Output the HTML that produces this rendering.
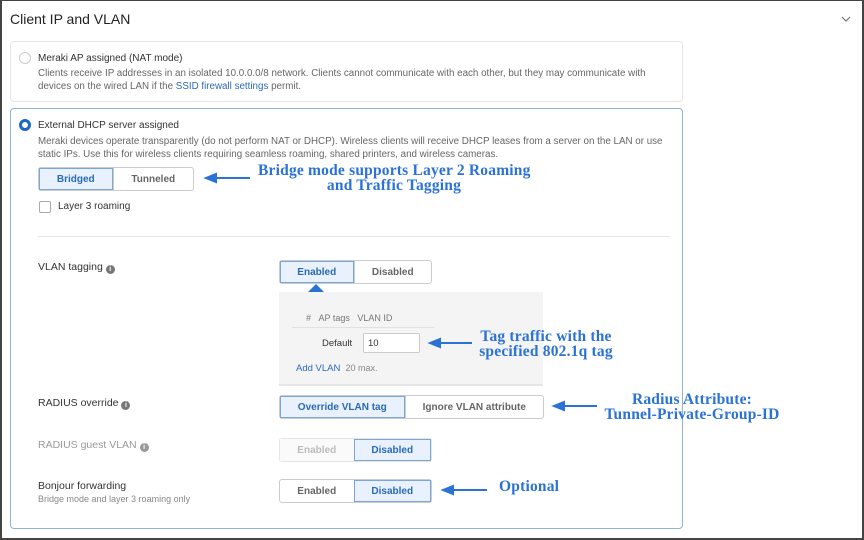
<!DOCTYPE html>
<html><head><meta charset="utf-8"><style>
*{margin:0;padding:0;box-sizing:border-box}
body{width:864px;height:540px;overflow:hidden;background:#fff;font-family:"Liberation Sans",sans-serif;position:relative}
.a{position:absolute;white-space:nowrap}
.frame{position:absolute;left:0;top:0;width:864px;height:540px;border:2px solid #444;border-top-width:1px}
.box{position:absolute;border:1px solid #e6e6e6;border-radius:4px}
.t{font-size:10px;color:#333}
.d{font-size:9.8px;color:#666}
.lbl{font-size:10.5px;color:#333}
.seg{position:absolute;display:flex;height:24px;border:1px solid #ccc;border-radius:3px;font-size:10px;font-weight:bold;color:#666}
.seg div{display:flex;align-items:center;justify-content:center;height:100%}
.on{background:#e8f1fc;color:#2a6ab8;outline:1px solid #7aa6d8;outline-offset:-1px}
.ann{position:absolute;font-family:"Liberation Serif",serif;font-weight:bold;color:#2b72d6;font-size:15.5px;text-align:center;line-height:15px;white-space:nowrap;letter-spacing:0.2px}
.info{display:inline-block;width:9px;height:9px;border-radius:50%;background:#777;color:#fff;font-size:7px;text-align:center;line-height:9px;vertical-align:-1px;font-weight:bold}
</style></head><body>
<div class="frame"></div>
<div class="a" style="left:10px;top:11px;font-size:14px;color:#222">Client IP and VLAN</div>
<svg class="a" style="left:841px;top:16px" width="10" height="7"><path d="M1 1 L5 5 L9 1" fill="none" stroke="#777" stroke-width="1.2"/></svg>

<div class="box" style="left:10px;top:41px;width:673px;height:61px"></div>
<div class="a" style="left:19px;top:52px;width:12px;height:12px;border:1px solid #ccc;border-radius:50%"></div>
<div class="a t" style="left:38px;top:53px">Meraki AP assigned (NAT mode)</div>
<div class="a d" style="left:38px;top:68px">Clients receive IP addresses in an isolated 10.0.0.0/8 network. Clients cannot communicate with each other, but they may communicate with</div>
<div class="a d" style="left:38px;top:81px">devices on the wired LAN if the <span style="color:#2a6ab8">SSID firewall settings</span> permit.</div>

<div class="box" style="left:10px;top:108px;width:673px;height:421px;border-color:#8fb4d4"></div>
<div class="a" style="left:19px;top:119px;width:12px;height:12px;border:3px solid #1c67c4;border-radius:50%"></div>
<div class="a t" style="left:38px;top:120px">External DHCP server assigned</div>
<div class="a d" style="left:38px;top:136px">Meraki devices operate transparently (do not perform NAT or DHCP). Wireless clients will receive DHCP leases from a server on the LAN or use</div>
<div class="a d" style="left:38px;top:149px">static IPs. Use this for wireless clients requiring seamless roaming, shared printers, and wireless cameras.</div>
<div class="seg" style="left:38px;top:167px;width:156px"><div class="on" style="width:74px">Bridged</div><div style="width:81px;border-left:1px solid #ccc">Tunneled</div></div>
<div class="a" style="left:39px;top:201px;width:12px;height:12px;border:1px solid #aaa;border-radius:2px"></div>
<div class="a t" style="left:58px;top:201px">Layer 3 roaming</div>
<div class="a" style="left:38px;top:236px;width:632px;height:1px;background:#e6e6e6"></div>

<div class="a lbl" style="left:38px;top:261px">VLAN tagging <span class="info">i</span></div>
<div class="seg" style="left:279px;top:260px;width:153px"><div class="on" style="width:74px">Enabled</div><div style="width:78px;border-left:1px solid #ccc">Disabled</div></div>
<svg class="a" style="left:308px;top:283px" width="16" height="9"><path d="M0 9 L8 1 L16 9Z" fill="#2b72d6"/></svg>
<div class="a" style="left:279px;top:292px;width:264px;height:94px;background:#f4f4f4;border-bottom:2px solid #e6e6e6"></div>
<div class="a" style="left:306px;top:313px;font-size:9px;color:#777">#&nbsp;&nbsp;&nbsp;AP tags&nbsp;&nbsp;&nbsp;VLAN ID</div>
<div class="a" style="left:292px;top:327px;width:142px;height:1px;background:#e2e2e2"></div>
<div class="a" style="left:322px;top:338px;font-size:9.5px;color:#333">Default</div>
<div class="a" style="left:363px;top:333px;width:57px;height:20px;background:#fff;border:1px solid #ccc;border-radius:2px;font-size:9.5px;color:#333;padding:4px 0 0 4px">10</div>
<div class="a" style="left:296px;top:363px;font-size:9.5px;color:#2a6ab8">Add VLAN <span style="color:#888;font-size:9px">&nbsp;20 max.</span></div>

<div class="a lbl" style="left:38px;top:397px">RADIUS override <span class="info">i</span></div>
<div class="seg" style="left:279px;top:395px;width:265px"><div class="on" style="width:125px">Override VLAN tag</div><div style="width:139px;border-left:1px solid #ccc">Ignore VLAN attribute</div></div>

<div class="a lbl" style="left:38px;top:439px;color:#999">RADIUS guest VLAN <span class="info" style="background:#999">i</span></div>
<div class="seg" style="left:279px;top:438px;width:153px;border-color:#e4e4e4"><div style="width:74px;color:#bbb;background:#fafafa">Enabled</div><div class="on" style="width:78px">Disabled</div></div>

<div class="a lbl" style="left:38px;top:480px">Bonjour forwarding</div>
<div class="a" style="left:38px;top:494px;font-size:9px;color:#888">Bridge mode and layer 3 roaming only</div>
<div class="seg" style="left:279px;top:479px;width:153px"><div style="width:74px">Enabled</div><div class="on" style="width:78px">Disabled</div></div>

<svg class="a" style="left:0;top:0" width="864" height="540">
<g stroke="#2b72d6" stroke-width="2" fill="#2b72d6">
<line x1="212" y1="178" x2="250" y2="178"/><path d="M206 178 L216 174 L216 182Z"/>
<line x1="436" y1="343" x2="472" y2="343"/><path d="M430 343 L440 339 L440 347Z"/>
<line x1="560" y1="406" x2="597" y2="406"/><path d="M554 406 L564 402 L564 410Z"/>
<line x1="449" y1="490" x2="487" y2="490"/><path d="M443 490 L453 486 L453 494Z"/>
</g></svg>
<div class="ann" style="left:258px;top:163px;width:272px">Bridge mode supports Layer 2 Roaming<br>and Traffic Tagging</div>
<div class="ann" style="left:476px;top:329px;width:140px">Tag traffic with the<br>specified 802.1q tag</div>
<div class="ann" style="left:604px;top:392px;width:176px">Radius Attribute:<br>Tunnel-Private-Group-ID</div>
<div class="ann" style="left:499px;top:479px">Optional</div>
</body></html>
